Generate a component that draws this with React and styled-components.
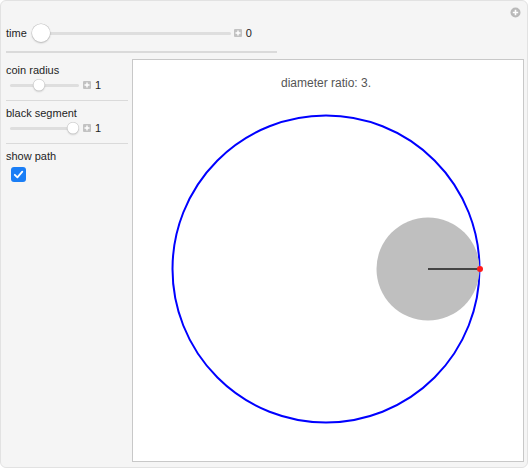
import React from "react";
import styled, { createGlobalStyle } from "styled-components";

const Global = createGlobalStyle`
  html, body { margin: 0; padding: 0; background: #ffffff; }
  body { font-family: "Liberation Sans", Arial, sans-serif; }
`;

const Frame = styled.div`
  box-sizing: border-box;
  width: 528px;
  height: 468px;
  background: #f5f5f5;
  border: 1px solid #e2e2e2;
  border-radius: 6px;
  display: flex;
  flex-direction: column;
  padding: 6px 3px 4px 5px;
`;

const Header = styled.div`
  display: flex;
  justify-content: flex-end;
  height: 12px;
  padding-right: 3px;
`;

const TimeRow = styled.div`
  display: flex;
  align-items: center;
  height: 20px;
  margin-top: 4px;
`;

const Label = styled.span`
  font-size: 11px;
  line-height: 13px;
  color: #1e1e1e;
  white-space: nowrap;
`;

const Rule = styled.div`
  height: ${(p) => p.$thick || 1}px;
  width: ${(p) => p.$width}px;
  background: #dadada;
  margin-top: ${(p) => p.$top || 0}px;
`;

const Main = styled.div`
  display: flex;
  margin-top: 6px;
  flex: 1;
`;

const Sidebar = styled.div`
  width: 125px;
  flex-shrink: 0;
  display: flex;
  flex-direction: column;
  padding-top: 5px;
`;

const SliderRow = styled.div`
  display: flex;
  align-items: center;
  height: 14px;
  margin-top: 1px;
  padding-left: ${(p) => p.$indent || 0}px;
`;

const Track = styled.div`
  position: relative;
  width: ${(p) => p.$width}px;
  height: 3px;
  border-radius: 2px;
  background: #dedede;
  margin-left: ${(p) => p.$gap || 0}px;
`;

const Thumb = styled.div`
  position: absolute;
  top: 50%;
  width: ${(p) => p.$size}px;
  height: ${(p) => p.$size}px;
  border-radius: 50%;
  background: #ffffff;
  box-shadow: 0 0 0 0.5px #c4c4c4, 0 1px 2px rgba(0, 0, 0, 0.25);
  transform: translate(-50%, -50%);
`;

const PlusBox = styled.div`
  width: 8px;
  height: 8px;
  margin-left: ${(p) => p.$gap}px;
  background: #c2c2c2;
  border-radius: 1px;
  display: flex;
  align-items: center;
  justify-content: center;
`;

const Value = styled.span`
  font-size: 11px;
  color: #1e1e1e;
  margin-left: 4px;
`;

const Section = styled.div`
  display: flex;
  flex-direction: column;
  margin-top: ${(p) => p.$top || 0}px;
`;

const Check = styled.div`
  width: 15px;
  height: 15px;
  border-radius: 3px;
  background: #1a7ef6;
  margin: 4px 0 0 5px;
  display: flex;
  align-items: center;
  justify-content: center;
`;

const Plot = styled.div`
  box-sizing: border-box;
  width: 392px;
  height: 403px;
  margin-left: 1px;
  flex-shrink: 0;
  background: #ffffff;
  border: 1px solid #c8c8c8;
`;

const PlusIcon = () => (
  <svg width="6" height="6" viewBox="0 0 6 6">
    <path d="M3 0.5v5M0.5 3h5" stroke="#fff" strokeWidth="1.4" />
  </svg>
);

const CornerButton = () => (
  <svg width="11" height="11" viewBox="0 0 11 11">
    <circle cx="5.5" cy="5.5" r="5" fill="#b9b9b9" />
    <path d="M5.5 2.8v5.4M2.8 5.5h5.4" stroke="#fff" strokeWidth="1.6" />
  </svg>
);

const Slider = ({ width, thumb, pos, gap, indent, plusGap, value }) => (
  <SliderRow $indent={indent}>
    <Track $width={width} $gap={gap}>
      <Thumb $size={thumb} style={{ left: `${pos}px` }} />
    </Track>
    <PlusBox $gap={plusGap}>
      <PlusIcon />
    </PlusBox>
    <Value>{value}</Value>
  </SliderRow>
);

export default function App() {
  return (
    <>
      <Global />
      <Frame>
        <Header>
          <CornerButton />
        </Header>
        <TimeRow>
          <Label>time</Label>
          <Track $width={199} $gap={5}>
            <Thumb $size={18} style={{ left: "9px" }} />
          </Track>
          <PlusBox $gap={3}>
            <PlusIcon />
          </PlusBox>
          <Value>0</Value>
        </TimeRow>
        <Rule $thick={2} $width={271} $top={8} />
        <Main>
          <Sidebar>
            <Section>
              <Label>coin radius</Label>
              <Slider width={69} thumb={11} pos={29} indent={4} plusGap={4} value="1" />
            </Section>
            <Rule $width={122} $top={8} />
            <Section $top={6}>
              <Label>black segment</Label>
              <Slider width={69} thumb={11} pos={63} indent={4} plusGap={4} value="1" />
            </Section>
            <Rule $width={122} $top={8} />
            <Section $top={6}>
              <Label>show path</Label>
              <Check>
                <svg width="11" height="11" viewBox="0 0 11 11">
                  <path d="M1.8 5.8l2.6 2.6L9.3 2.6" fill="none" stroke="#fff" strokeWidth="1.8" strokeLinecap="round" strokeLinejoin="round" />
                </svg>
              </Check>
            </Section>
          </Sidebar>
          <Plot>
            <svg width="390" height="401" viewBox="0 0 390 401">
              <text x="193" y="27" textAnchor="middle" fontFamily="Liberation Sans, Arial, sans-serif" fontSize="12" fill="#555">
                diameter ratio: 3.
              </text>
              <circle cx="193" cy="209" r="153.5" fill="none" stroke="#0000ff" strokeWidth="2" />
              <circle cx="295" cy="209" r="51.5" fill="#bfbfbf" />
              <line x1="295" y1="209" x2="347" y2="209" stroke="#444" strokeWidth="2" />
              <circle cx="347" cy="209" r="3" fill="#ff1a1a" />
            </svg>
          </Plot>
        </Main>
      </Frame>
    </>
  );
}
